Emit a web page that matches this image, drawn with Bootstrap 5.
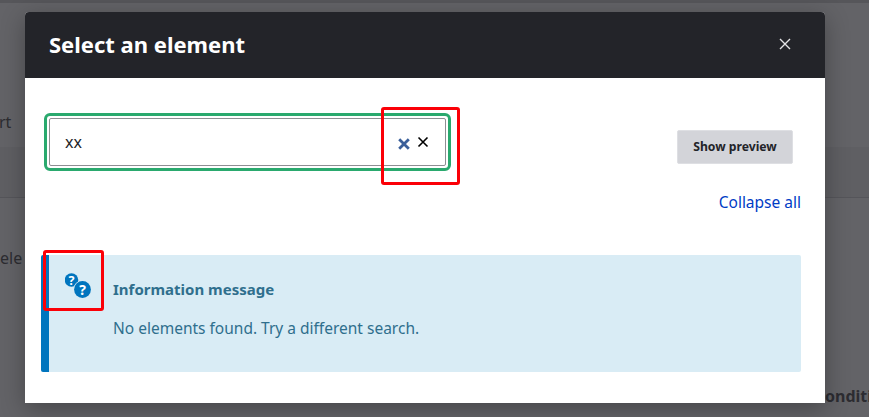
<!DOCTYPE html>
<html lang="en">
<head>
  <meta charset="UTF-8">
  <meta name="viewport" content="width=device-width, initial-scale=1.0">
  <title>Select an element</title>
  <link href="https://cdn.jsdelivr.net/npm/bootstrap@5.3.3/dist/css/bootstrap.min.css" rel="stylesheet">
  <style>
    html, body {
      height: 417px;
      overflow: hidden;
    }
    body {
      font-family: "Noto Sans", "Open Sans", sans-serif;
      font-size: 16px;
      background: #636367;
      color: #232429;
    }
    .page-under {
      height: 417px;
      position: relative;
      border-top: 3px solid #56565a;
      color: #2c2c31;
    }
    .under-band {
      position: absolute;
      left: 0;
      right: 0;
      top: 144px;
      height: 51px;
      background: #5f5f63;
      border-bottom: 1px solid #55555a;
    }
    .under-text {
      position: absolute;
      white-space: nowrap;
      font-size: 16px;
    }
    .select-modal {
      position: absolute;
      left: 25px;
      top: 12px;
      width: 800px;
      height: 391px;
      border: 0;
      border-radius: 4px 4px 0 0;
      box-shadow: 0 6px 24px rgba(0, 0, 0, .3);
    }
    .select-head {
      height: 66px;
      background: #232429;
      border-radius: 4px 4px 0 0;
      padding: 0 32px 2px 24px;
    }
    .select-title {
      color: #fff;
      font-size: 22px;
      font-weight: 700;
      margin: 0;
    }
    .select-close {
      width: 16px;
      height: 16px;
      padding: 0;
      border: 0;
      background: none;
      line-height: 0;
    }
    .select-body {
      padding: 35px 24px 0 16px;
    }
    .search-ring {
      width: 407px;
      height: 58px;
      margin-left: 3px;
      border: 3px solid #2aa96e;
      border-radius: 6px;
      padding: 2px;
    }
    .search-inner {
      height: 100%;
      border: 1px solid #8e8e93;
      border-radius: 2px;
      padding: 0 16px 0 15px;
    }
    .search-value {
      border: 0;
      padding: 0;
      outline: 0;
      font-size: 16px;
      color: #232429;
      box-shadow: none;
      height: auto;
      min-width: 0;
    }
    .icon-gap {
      gap: 7px;
    }
    .clear-icon {
      margin-top: 3px;
    }
    .btn-preview {
      width: 116px;
      height: 34px;
      margin: 17px 8px 0 0;
      padding: 0;
      background: #d3d4d9;
      border: 1px solid #dedfe3;
      border-radius: 2px;
      color: #232429;
      font-size: 12.2px;
      font-weight: 700;
    }
    .collapse-link {
      margin-top: 20px;
      line-height: 22px;
      font-size: 15.5px;
      color: #003cc5;
      text-decoration: none;
    }
    .info-box {
      height: 117px;
      margin-top: 41px;
      background: #d9ecf5;
      border: 0;
      border-left: 8px solid #0075be;
      border-radius: 2px;
      color: #2f6f8d;
      padding: 0;
    }
    .info-icon {
      width: 64px;
      padding: 17px 0 0 16px;
      line-height: 0;
    }
    .info-title {
      font-size: 15px;
      font-weight: 700;
      margin: 23px 0 0;
      line-height: 22px;
    }
    .info-text {
      margin: 17px 0 0;
      line-height: 22px;
      font-size: 15.5px;
    }
    .note-box {
      position: absolute;
      border: 3px solid #fb0007;
      border-radius: 3px;
      pointer-events: none;
    }
    .note-search {
      left: 381px;
      top: 107px;
      width: 79px;
      height: 78px;
    }
    .note-icon {
      left: 43px;
      top: 250px;
      width: 61px;
      height: 61px;
    }
  </style>
</head>
<body>
  <div class="page-under">
    <div class="under-band"></div>
    <span class="under-text" style="left:-1px;top:107px">rt</span>
    <span class="under-text" style="left:0;top:243px">ele</span>
    <span class="under-text fw-bold" style="left:825px;top:381px">onditi</span>
  </div>

  <div class="modal-content select-modal bg-white">
    <div class="select-head d-flex align-items-center justify-content-between">
      <h1 class="select-title">Select an element</h1>
      <button type="button" class="select-close" aria-label="Close">
        <svg width="16" height="16" viewBox="0 0 16 16"><path d="M3 3l10 10M13 3L3 13" stroke="#e4e4e6" stroke-width="1.4" fill="none"/></svg>
      </button>
    </div>
    <div class="select-body">
      <div class="d-flex justify-content-between align-items-start">
        <div class="search-ring">
          <div class="search-inner d-flex align-items-center justify-content-between">
            <input type="text" class="search-value flex-grow-1" value="xx">
            <span class="d-flex align-items-center icon-gap">
              <svg class="clear-icon" width="12" height="12" viewBox="0 0 12 12"><path d="M1.2 1.2l9.6 9.6M10.8 1.2l-9.6 9.6" stroke="#3a5f9a" stroke-width="2.8" fill="none"/></svg>
              <svg width="12" height="12" viewBox="0 0 12 12"><path d="M1.5 1.5l9 9M10.5 1.5l-9 9" stroke="#000" stroke-width="1.6" fill="none"/></svg>
            </span>
          </div>
        </div>
        <button type="button" class="btn btn-preview">Show preview</button>
      </div>
      <div class="text-end">
        <a href="#" class="collapse-link d-inline-block">Collapse all</a>
      </div>
      <div class="alert info-box d-flex mb-0" role="alert">
        <div class="info-icon flex-shrink-0">
          <svg width="28" height="28" viewBox="0 0 28 28">
            <circle cx="6.5" cy="8" r="6.8" fill="#0075be"/>
            <circle cx="17.5" cy="17.5" r="9.2" fill="#d9ecf5"/>
            <circle cx="17.5" cy="17.5" r="8.4" fill="#0075be"/>
            <text x="6.5" y="12.5" text-anchor="middle" font-family="Noto Sans, sans-serif" font-size="12.5" font-weight="700" fill="#fff">?</text>
            <text x="17.5" y="22.5" text-anchor="middle" font-family="Noto Sans, sans-serif" font-size="14" font-weight="700" fill="#fff">?</text>
          </svg>
        </div>
        <div>
          <p class="info-title">Information message</p>
          <p class="info-text">No elements found. Try a different search.</p>
        </div>
      </div>
    </div>
  </div>

  <div class="note-box note-search"></div>
  <div class="note-box note-icon"></div>

  <script src="https://cdn.jsdelivr.net/npm/bootstrap@5.3.3/dist/js/bootstrap.bundle.min.js"></script>
</body>
</html>
